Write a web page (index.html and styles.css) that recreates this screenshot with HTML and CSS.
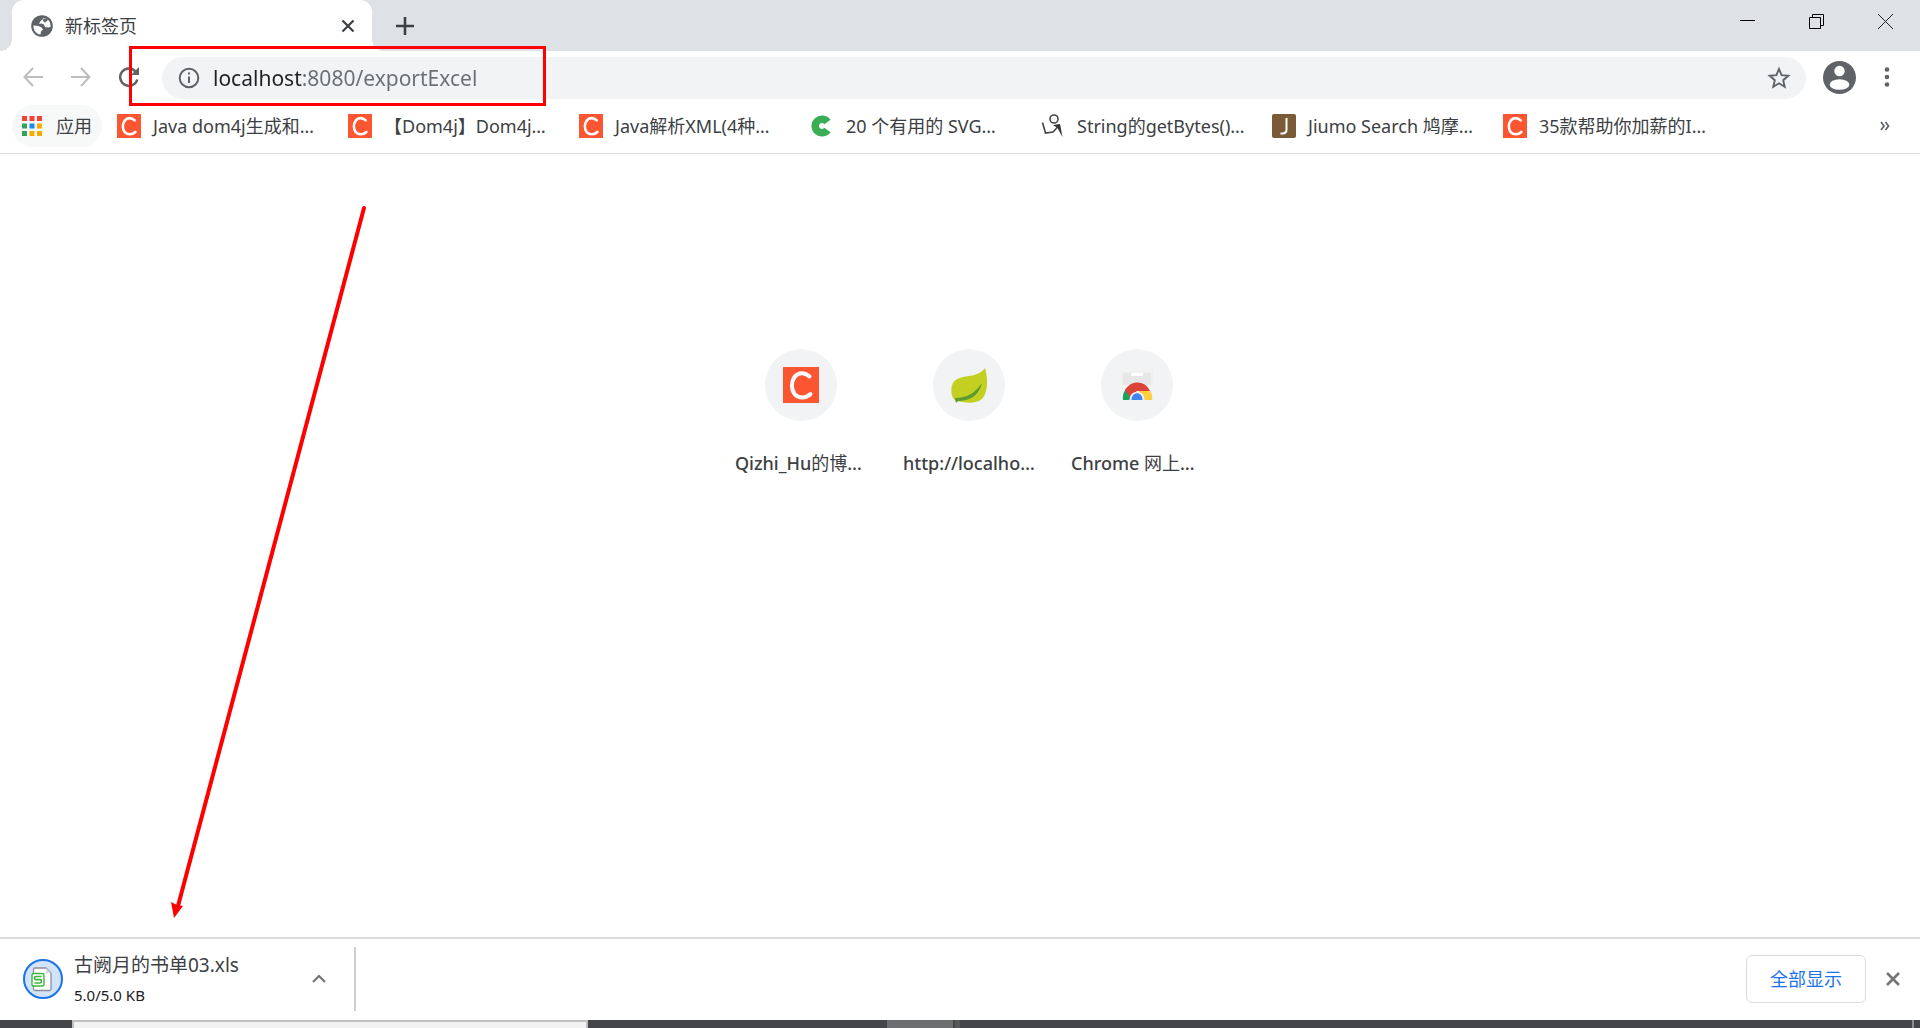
FILE: index.html
```html
<!DOCTYPE html>
<html lang="zh-CN">
<head>
    <meta charset="UTF-8">
    <meta name="viewport" content="width=device-width, initial-scale=1.0">
    <title>新标签页</title>
    <link rel="stylesheet" href="styles.css">
</head>
<body>
    <!-- Logo shared by bookmarks and tiles -->
    <svg class="defs" aria-hidden="true">
        <symbol id="c-logo" viewBox="0 0 36 36">
            <rect width="36" height="36" fill="#fc5531"/>
            <path d="M26.500 9.500C22 5 15.500 5 11.500 10C8 15 8 22 11.500 27C15 31.500 23 31.500 27.500 27" fill="none" stroke="#fff" stroke-width="4" stroke-linecap="round"/>
        </symbol>
    </svg>

    <header class="tab-strip">
        <div class="tab">
            <svg class="tab-icon" viewBox="0 0 22 22">
                <circle cx="11" cy="11" r="10.8" fill="#5f6368"/>
                <path d="M12.500 2.800L11.500 4.500L9.500 6L8 9L10.500 8.500L13 9.500L14 12L17 12.500L19.500 12C20 7 17 3.500 12.500 2.800Z" fill="#fff"/>
                <path d="M2.500 10.500L7.500 11L10.500 12.500L12 14.500L10 16.500L9.500 19.500C5 19 2 15 2.500 10.500Z" fill="#fff"/>
                <path d="M12.500 3.500H16L17 5L14 7.500L12 6Z" fill="#5f6368"/>
            </svg>
            <span class="tab-title">新标签页</span>
            <button class="tab-close" aria-label="关闭标签页">
                <svg width="14" height="14" viewBox="0 0 14 14"><path d="M1.500 1.500L12.500 12.500M12.500 1.500L1.500 12.500" stroke="#3c4043" stroke-width="2.200"/></svg>
            </button>
        </div>
        <button class="new-tab" aria-label="新建标签页">
            <svg width="18" height="18" viewBox="0 0 18 18"><path d="M9 0V18M0 9H18" stroke="#3c4043" stroke-width="2.600"/></svg>
        </button>
        <div class="window-controls">
            <button aria-label="最小化">
                <svg width="15" height="15" viewBox="0 0 15 15"><path d="M0 6.500H15" stroke="#000"/></svg>
            </button>
            <button aria-label="还原">
                <svg width="15" height="15" viewBox="0 0 15 15" fill="none" stroke="#000"><path d="M.5 3.500H11.500V14.500H.5ZM3.500 3.500V.5H14.500V11.500H11.500"/></svg>
            </button>
            <button aria-label="关闭">
                <svg width="15" height="15" viewBox="0 0 15 15"><path d="M0 0L15 15M15 0L0 15" stroke="#222"/></svg>
            </button>
        </div>
    </header>

    <nav class="toolbar">
        <button class="tool-btn" aria-label="后退">
            <svg width="20" height="20" viewBox="0 0 20 20" fill="none" stroke="#bdbdbd" stroke-width="2"><path d="M20 10H1.500M10 1L1.500 10L10 19"/></svg>
        </button>
        <button class="tool-btn" aria-label="前进">
            <svg width="20" height="20" viewBox="0 0 20 20" fill="none" stroke="#bdbdbd" stroke-width="2"><path d="M0 10H18.500M10 1L18.500 10L10 19"/></svg>
        </button>
        <button class="tool-btn" aria-label="重新加载">
            <svg width="22" height="22" viewBox="0 0 22 22"><path d="M17.500 5.500A8.700 8.700 0 1 0 19.300 13.500" fill="none" stroke="#5f6368" stroke-width="2.500"/><path d="M21 1V9H13Z" fill="#5f6368"/></svg>
        </button>
        <div class="omnibox">
            <svg width="22" height="22" viewBox="0 0 22 22"><circle cx="11" cy="11" r="9.300" fill="none" stroke="#5f6368" stroke-width="2"/><path d="M10 5.500H12V7.500H10ZM10 9.500H12V16H10Z" fill="#5f6368"/></svg>
            <input class="url" type="text" value="localhost:8080/exportExcel" aria-label="地址栏">
            <button class="star" aria-label="添加书签">
                <svg width="24" height="24" viewBox="0 0 24 24"><path d="M12 3L14.600 9.200L21.300 9.800L16.200 14.200L17.700 20.700L12 17.300L6.300 20.700L7.800 14.200L2.700 9.800L9.400 9.200Z" fill="none" stroke="#5f6368" stroke-width="1.900"/></svg>
            </button>
        </div>
        <button class="profile" aria-label="用户">
            <svg width="33" height="33" viewBox="0 0 33 33"><circle cx="16.500" cy="16.500" r="16.500" fill="#5f6368"/><circle cx="16.500" cy="10" r="5.200" fill="#fff"/><ellipse cx="16.500" cy="23.500" rx="9.800" ry="5.300" fill="#fff"/></svg>
        </button>
        <button class="tool-btn" aria-label="菜单">
            <svg width="6" height="22" viewBox="0 0 6 22" fill="#5f6368"><circle cx="3" cy="3.500" r="2.300"/><circle cx="3" cy="11" r="2.300"/><circle cx="3" cy="18.500" r="2.300"/></svg>
        </button>
    </nav>

    <nav class="bookmarks">
        <button class="apps">
            <svg width="20" height="20" viewBox="0 0 20 20">
                <path d="M0 0H5V5H0ZM7.500 0H12.500V5H7.500ZM15 0H20V5H15Z" fill="#f44336"/>
                <path d="M0 7.500H5V12.500H0ZM0 15H5V20H0Z" fill="#34a05a"/>
                <path d="M7.500 7.500H12.500V12.500H7.500Z" fill="#1e88f5"/>
                <path d="M15 7.500H20V12.500H15ZM7.500 15H12.500V20H7.500ZM15 15H20V20H15Z" fill="#f9ab00"/>
            </svg>
            应用
        </button>
        <a href="#" class="bookmark"><svg class="favicon"><use href="#c-logo"/></svg>Java dom4j生成和…</a>
        <a href="#" class="bookmark"><svg class="favicon"><use href="#c-logo"/></svg>【Dom4j】Dom4j…</a>
        <a href="#" class="bookmark"><svg class="favicon"><use href="#c-logo"/></svg>Java解析XML(4种…</a>
        <a href="#" class="bookmark">
            <svg class="favicon" viewBox="0 0 24 24"><path d="M17.500 8A6.800 6.800 0 1 0 17.500 16" fill="none" stroke="#3aae54" stroke-width="7.500"/></svg>20 个有用的 SVG…
        </a>
        <a href="#" class="bookmark">
            <svg class="favicon" viewBox="0 0 24 24" fill="none" stroke="#444"><circle cx="13" cy="5" r="4" stroke-width="1.600"/><path d="M1.500 8.500L4.500 19L12 18L18.500 11" stroke-width="1.600"/><path d="M12 11L19 10L21.500 23L16.500 14Z" fill="#333" stroke="none"/></svg>String的getBytes()…
        </a>
        <a href="#" class="bookmark">
            <svg class="favicon" viewBox="0 0 24 24"><rect width="24" height="24" rx="2" fill="#7b5a38"/><path d="M14.500 4V15.500Q14.500 19.500 10.500 19.500H8.500" fill="none" stroke="#fff" stroke-width="2"/></svg>Jiumo Search 鸠摩…
        </a>
        <a href="#" class="bookmark"><svg class="favicon"><use href="#c-logo"/></svg>35款帮助你加薪的I…</a>
        <button class="more" aria-label="更多书签">
            <svg width="10" height="10" viewBox="0 0 10 10"><path d="M1 1L4 5L1 9M5.500 1L8.500 5L5.500 9" fill="none" stroke="#5f6368" stroke-width="1.700"/></svg>
        </button>
    </nav>

    <main class="page">
        <a href="#" class="tile">
            <span class="tile-icon"><svg width="36" height="36"><use href="#c-logo"/></svg></span>
            <span class="tile-label">Qizhi_Hu<span class="cjk">的博</span>…</span>
        </a>
        <a href="#" class="tile">
            <span class="tile-icon">
                <svg width="36" height="36" viewBox="0 0 36 36"><path d="M34 1C38 14 36 27 31 32C24 38 12 35 5 34C0 31-1 22 2 16C8 6 25 13 34 1Z" fill="#c3d021"/><path d="M4 31C16 31 24 26 31 16C28 29 18 34 7 34L5 36Z" fill="#5d9b2f"/></svg>
            </span>
            <span class="tile-label">http://localho…</span>
        </a>
        <a href="#" class="tile">
            <span class="tile-icon">
                <svg width="36" height="36" viewBox="0 0 36 36">
                    <path d="M2 4H34V18H2Z" fill="#e7e7e7"/>
                    <path d="M4 18H32V32H4Z" fill="#f4f4f4"/>
                    <path d="M3 18V5H33V18" fill="none" stroke="#fafafa"/>
                    <rect x="12" y="6" width="12" height="3" rx="1" fill="#fff"/>
                    <path d="M4 33Q3 27 7 22L14 33Z" fill="#1aa260"/>
                    <path d="M20 24H31Q34 28 33 33H21Z" fill="#ffcd40"/>
                    <path d="M6 23C12 13 26 13 31 24H18L11 30Z" fill="#db4437"/>
                    <path d="M10.500 33C10.500 22 25.500 22 25.500 33Z" fill="#f1f1f1"/>
                    <path d="M12.500 33C12.500 24 23.500 24 23.500 33Z" fill="#4285f4"/>
                </svg>
            </span>
            <span class="tile-label">Chrome <span class="cjk">网上</span>…</span>
        </a>
    </main>

    <footer class="downloads">
        <div class="download">
            <svg width="40" height="40" viewBox="0 0 40 40">
                <circle cx="20" cy="20" r="19" fill="#d2e3fc" stroke="#1a73e8" stroke-width="2"/>
                <path d="M12 9H23L28 14V30Q28 31.500 26.500 31.500H12Q10.500 31.500 10.500 30V10.500Q10.500 9 12 9Z" fill="#fff" stroke="#8a8f98" stroke-width="1.300"/>
                <path d="M23 9V14H28Z" fill="#d8dae2"/>
                <rect x="9" y="14.500" width="12" height="12.500" rx="1.500" fill="#fff" stroke="#3fb73f" stroke-width="1.400"/>
                <path d="M18.500 17.500H13Q11.500 17.500 11.500 19T13 20.700H17Q18.500 20.700 18.500 22.300T17 24H11.500" fill="none" stroke="#3fb73f" stroke-width="1.700"/>
            </svg>
            <div class="download-text">
                <div class="file-name">古阙月的书单03.xls</div>
                <div class="file-size">5.0/5.0 KB</div>
            </div>
            <button class="download-menu" aria-label="下载选项">
                <svg width="14" height="9" viewBox="0 0 14 9"><path d="M1 8L7 2L13 8" fill="none" stroke="#757575" stroke-width="2.200"/></svg>
            </button>
        </div>
        <button class="show-all">全部显示</button>
        <button class="shelf-close" aria-label="关闭下载栏">
            <svg width="14" height="14" viewBox="0 0 14 14"><path d="M1 1L13 13M13 1L1 13" stroke="#757575" stroke-width="2.600"/></svg>
        </button>
    </footer>

    <div class="taskbar">
        <div class="task-search"></div>
        <div class="task-app"></div>
        <div class="task-edge"></div>
        <div class="task-desktop"></div>
    </div>

    <!-- Annotations drawn over the window -->
    <div class="mark-box"></div>
    <svg class="mark-arrow" viewBox="0 0 200 720">
        <path d="M194 8L8 706" stroke="#f00" stroke-width="4" stroke-linecap="round"/>
        <path d="M4 718L1 702L7 705L13 706Z" fill="#f00"/>
    </svg>
</body>
</html>
```
FILE: styles.css
```css
* {
    box-sizing: border-box;
}
body {
    display: flex;
    flex-direction: column;
    min-height: 100vh;
    margin: 0;
    position: relative;
    background: #fff;
    color: #3c4043;
    font-family: "Noto Sans", "Noto Sans CJK SC", sans-serif;
    font-size: 18px;
    line-height: 24px;
}
button {
    display: flex;
    align-items: center;
    justify-content: center;
    padding: 0;
    border: none;
    background: none;
    color: inherit;
    font: inherit;
    cursor: pointer;
}
a {
    color: inherit;
    text-decoration: none;
}
svg {
    flex-shrink: 0;
}
.defs {
    position: absolute;
    width: 0;
    height: 0;
}

/* Tabs */
.tab-strip {
    display: flex;
    height: 51px;
    padding-left: 12px;
    background: #dee1e6;
}
.tab {
    position: relative;
    display: flex;
    align-items: center;
    width: 360px;
    padding: 0 14px 0 19px;
    border-radius: 12px 12px 0 0;
    background: #fff;
}
.tab::before, .tab::after {
    content: "";
    position: absolute;
    bottom: 0;
    width: 12px;
    height: 12px;
}
.tab::before {
    right: 100%;
    background: radial-gradient(circle at 0 0, #dee1e6 12px, #fff 12px);
}
.tab::after {
    left: 100%;
    background: radial-gradient(circle at 100% 0, #dee1e6 12px, #fff 12px);
}
.tab-icon {
    width: 22px;
    height: 22px;
}
.tab-title {
    flex: 1;
    margin-left: 12px;
}
.tab-close {
    width: 20px;
    height: 24px;
}
.new-tab {
    width: 42px;
    margin-left: 12px;
}
.window-controls {
    display: flex;
    height: 43px;
    margin-left: auto;
}
.window-controls button {
    width: 69px;
}

/* Toolbar */
.toolbar {
    display: flex;
    align-items: center;
    height: 54px;
    padding: 0 9px;
}
.tool-btn {
    width: 48px;
    height: 44px;
    padding-bottom: 2px;
}
.omnibox {
    display: flex;
    flex: 1;
    align-items: center;
    height: 42px;
    margin-left: 9px;
    padding: 0 15px 0 16px;
    border-radius: 21px;
    background: #f1f3f4;
}
.url {
    flex: 1;
    height: 40px;
    margin-left: 13px;
    padding: 0;
    border: none;
    outline: none;
    font: inherit;
    font-size: 21px;
    /* host is darker than the rest of the address */
    background: linear-gradient(to right, #202124 89px, #6a6e73 89px);
    background-clip: text;
    -webkit-text-fill-color: transparent;
}
.profile {
    width: 48px;
    margin-left: 9px;
    padding-bottom: 2px;
}

/* Bookmarks */
.bookmarks {
    display: flex;
    align-items: center;
    height: 49px;
    padding: 0 12px 6px;
    border-bottom: 1px solid #dadce0;
}
.apps {
    gap: 14px;
    width: 90px;
    height: 42px;
    margin-right: 15px;
    border-radius: 21px;
    background: #f7f8f8;
}
.bookmark {
    display: flex;
    align-items: center;
    gap: 12px;
    width: 231px;
    white-space: nowrap;
}
.favicon {
    width: 24px;
    height: 24px;
}
.more {
    width: 46px;
    margin-left: auto;
}

/* New tab page */
.page {
    display: flex;
    flex: 1;
    justify-content: center;
    padding-top: 195px;
    padding-left: 18px;
}
.tile {
    display: flex;
    flex-direction: column;
    align-items: center;
    width: 168px;
    padding: 0 18px;
}
.tile-icon {
    display: flex;
    align-items: center;
    justify-content: center;
    width: 72px;
    height: 72px;
    border-radius: 50%;
    background: #f1f3f4;
}
.tile-label {
    width: 100%;
    margin-top: 30px;
    font-weight: 500;
    white-space: nowrap;
}
.cjk {
    font-weight: 400;
}

/* Downloads shelf */
.downloads {
    display: flex;
    align-items: center;
    height: 83px;
    padding: 0 17px 2px 0;
    border-top: 2px solid #dadce0;
}
.download {
    display: flex;
    align-items: center;
    width: 356px;
    height: 64px;
    padding: 0 24px 0 23px;
    border-right: 2px solid #d0d0d0;
}
.download-text {
    flex: 1;
    margin-left: 11px;
}
.file-name {
    font-size: 19px;
    line-height: 32px;
}
.file-size {
    color: #202124;
    font-size: 15px;
    line-height: 28px;
}
.download-menu {
    width: 22px;
    height: 40px;
}
.show-all {
    width: 120px;
    height: 48px;
    margin-left: auto;
    border: 1px solid #dadce0;
    border-radius: 6px;
    color: #1a73e8;
}
.shelf-close {
    width: 20px;
    height: 40px;
    margin-left: 17px;
}

/* Taskbar */
.taskbar {
    display: flex;
    height: 8px;
    background: #434548;
}
.task-search {
    width: 516px;
    margin-left: 72px;
    border: 2px solid #c0c0c0;
    border-bottom: none;
    background: #f2f2f2;
}
.task-app {
    width: 66px;
    margin-left: 299px;
    background: #6d6e6f;
}
.task-edge {
    width: 5px;
    margin-left: 2px;
    background: #555857;
}
.task-desktop {
    width: 2px;
    margin: 0 6px 0 auto;
    background: #8c8d8f;
}

/* Annotations */
.mark-box {
    position: absolute;
    left: 129px;
    top: 46px;
    width: 417px;
    height: 60px;
    border: 3px solid #f00;
    pointer-events: none;
}
.mark-arrow {
    position: absolute;
    left: 170px;
    top: 200px;
    width: 200px;
    height: 720px;
    pointer-events: none;
}
```
